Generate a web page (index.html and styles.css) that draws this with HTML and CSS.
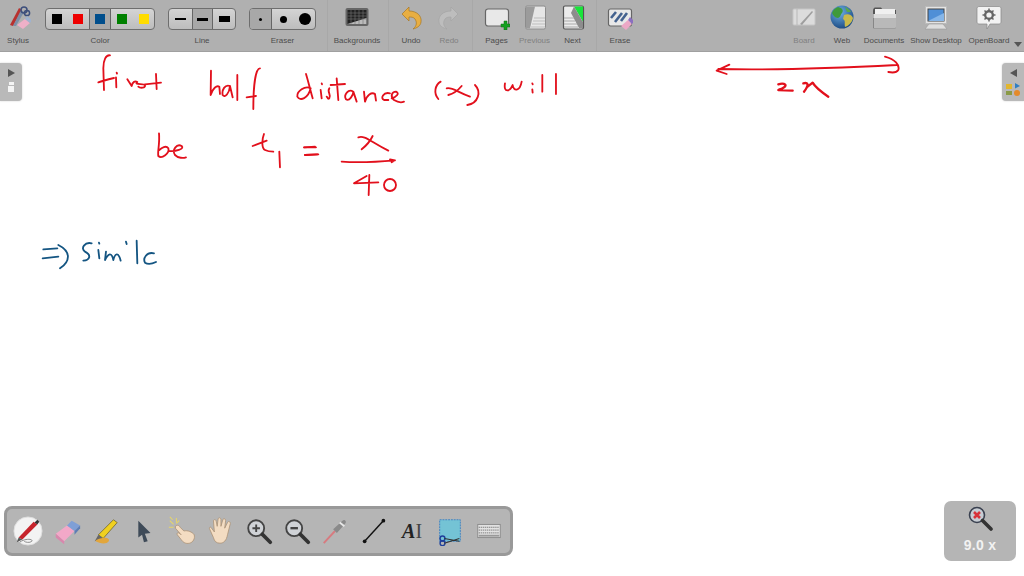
FILE: index.html
```html
<!DOCTYPE html>
<html lang="en">
<head>
<meta charset="utf-8">
<title>OpenBoard</title>
<link rel="stylesheet" href="styles.css">
</head>
<body>
<div class="app">
  <header class="toolbar">
    <div class="tool w36">
      <svg class="ic" viewBox="0 0 26 26"><path d="M5 21 L14 4 L17 6 L8 22 Z" fill="#b8312f"/><path d="M8 22 L16 6 L19 8 L11 22 Z" fill="#7d8fa8"/><circle cx="19" cy="6" r="3" fill="none" stroke="#3d4f7c" stroke-width="1.5"/><circle cx="22" cy="9" r="2.6" fill="none" stroke="#3d4f7c" stroke-width="1.5"/><path d="M12 21 L20 15 L25 19 L18 25 Z" fill="#eeb0c8"/><path d="M20 15 L25 19 L27 16 L22 12 Z" fill="#9fb2cf"/></svg>
      <span class="label">Stylus</span>
    </div>
    <div class="tool group-tool w110">
      <div class="seg">
        <span class="cell c21"><i class="swatch black"></i></span><span class="cell c22"><i class="swatch red"></i></span><span class="cell c22 on"><i class="swatch blue"></i></span><span class="cell c22"><i class="swatch green"></i></span><span class="cell c22"><i class="swatch yellow"></i></span>
      </div>
      <span class="label">Color</span>
    </div>
    <div class="tool group-tool w68">
      <div class="seg">
        <span class="cell c23"><i class="ln l1"></i></span><span class="cell c21 on"><i class="ln l2"></i></span><span class="cell c22"><i class="ln l3"></i></span>
      </div>
      <span class="label">Line</span>
    </div>
    <div class="tool group-tool w67">
      <div class="seg">
        <span class="cell c22 on"><i class="dot d1"></i></span><span class="cell c22"><i class="dot d2"></i></span><span class="cell c21"><i class="dot d3"></i></span>
      </div>
      <span class="label">Eraser</span>
    </div>
    <div class="tool w48 after-sep">
      <svg class="ic" viewBox="0 0 26 26"><rect x="1.500" y="4" width="23" height="18" rx="2" fill="#666"/><rect x="3.500" y="6" width="19" height="14" fill="#222"/><path d="M3.500 20 L22.500 14 V20 Z" fill="#bbb"/><path d="M3.500 9 H22.500 M3.500 12 H22.500 M3.500 15 H22.500 M7 6 V20 M11 6 V20 M15 6 V20 M19 6 V20" stroke="#777" stroke-width=".6"/></svg>
      <span class="label">Backgrounds</span>
    </div>
    <div class="tool w38">
      <svg class="ic" viewBox="0 0 26 26"><path d="M4 10 L11 3 V7 C19 7 24 12 23 18 C22.500 22 19 24 15 25 C19 22 19 18 17 15 C15.500 13 13 13 11 13 V17 Z" fill="#e8ae42" stroke="#a87722" stroke-width=".7"/></svg>
      <span class="label">Undo</span>
    </div>
    <div class="tool w38 after-sep">
      <svg class="ic" viewBox="0 0 26 26"><path d="M22 10 L15 3 V7 C7 7 2 12 3 18 C3.500 22 7 24 11 25 C7 22 7 18 9 15 C10.500 13 13 13 15 13 V17 Z" fill="#bdbdbd" stroke="#a5a5a5" stroke-width=".7"/></svg>
      <span class="label dim">Redo</span>
    </div>
    <div class="tool w38">
      <svg class="ic" viewBox="0 0 26 26"><rect x="1.500" y="5" width="23" height="17" rx="2.500" fill="#e8e8e8" stroke="#666" stroke-width="1.200"/><path d="M20 17 h3 v3 h3 v3 h-3 v3 h-3 v-3 h-3 v-3 h3 z" fill="#14a020" stroke="#0d6d15" stroke-width=".5"/></svg>
      <span class="label">Pages</span>
    </div>
    <div class="tool w38">
      <svg class="ic" viewBox="0 0 26 26"><rect x="3.500" y="2" width="20" height="23" rx="1.500" fill="#e6e6e6" stroke="#8c8c8c"/><path d="M4 2.500 H13 L8 24.500 H4 Z" fill="#9b9b9b"/><path d="M12 14 H23 M11 17 H23 M10 20 H23 M9 23 H23" stroke="#bdbdbd"/></svg>
      <span class="label dim">Previous</span>
    </div>
    <div class="tool w38 after-sep">
      <svg class="ic" viewBox="0 0 26 26"><rect x="3.500" y="2" width="20" height="23" rx="1.500" fill="#ececec" stroke="#555" stroke-width="1.200"/><path d="M14 2.500 H23 V18 Z" fill="#18e53a"/><path d="M14 2.500 L11 9 L19 24 H23 L23 18 Z" fill="#8d8d8d"/><path d="M4 14 H14 M4 17 H15 M4 20 H17 M4 23 H18" stroke="#aaa"/></svg>
      <span class="label">Next</span>
    </div>
    <div class="tool w38">
      <svg class="ic" viewBox="0 0 26 26"><rect x="1.500" y="5" width="23" height="17" rx="2" fill="#e8e8e8" stroke="#666" stroke-width="1.200"/><path d="M4 14 L9 8 M8 18 L15 9 M14 17 L20 9" stroke="#44628f" stroke-width="2.600"/><path d="M14 22 L21 16 L25 20 L19 26 Z" fill="#eca8c6"/><path d="M21 16 L25 20 L27 17 L23 13 Z" fill="#8a6fc0"/></svg>
      <span class="label">Erase</span>
    </div>
    <div class="spacer"></div>
    <div class="tool w38">
      <svg class="ic" viewBox="0 0 26 26"><rect x="2" y="5" width="22" height="16" rx="1" fill="#dcdcdc" stroke="#c6c6c6"/><path d="M6 5 V21" stroke="#b8b8b8"/><path d="M9 20 L21 7 L22 8 L11 21 Z" fill="#9e9e9e"/></svg>
      <span class="label dim">Board</span>
    </div>
    <div class="tool w38">
      <svg class="ic" viewBox="0 0 26 26"><defs><radialGradient id="sea" cx=".4" cy=".3" r=".8"><stop offset="0" stop-color="#6fb0e6"/><stop offset="1" stop-color="#123f78"/></radialGradient></defs><circle cx="13" cy="13" r="11.500" fill="url(#sea)"/><path d="M9 3 C13 4 15 6 13 9 C11 11 12 13 9 14 C6 14 4 11 3 9 C4 6 6 4 9 3 Z" fill="#3f9a3a"/><path d="M15 11 C19 9 23 11 24 14 C23 19 19 22 16 23 C15 19 17 17 14 15 Z" fill="#c9b94b"/><path d="M16 3 C19 4 21 6 22 8 L18 8 Z" fill="#5aa94a"/></svg>
      <span class="label">Web</span>
    </div>
    <div class="tool w46">
      <svg class="ic" viewBox="0 0 26 26"><path d="M2 7 V23 C2 24 3 24.500 4 24.500 H23 C24 24.500 25 24 25 23 V6 H12 L10 3.500 H4 C3 3.500 2 5 2 7 Z" fill="#555"/><rect x="4" y="5" width="20" height="8" fill="#f0f0f0"/><path d="M2.500 10 H25 V23 C25 24 24 24.500 23 24.500 H4 C3 24.500 2.500 24 2.500 23 Z" fill="#b9b9b9"/><path d="M2.500 10 H25 V14 H2.500 Z" fill="#dcdcdc"/></svg>
      <span class="label">Documents</span>
    </div>
    <div class="tool w58">
      <svg class="ic" viewBox="0 0 26 26"><rect x="2.500" y="2.500" width="21" height="17" fill="#e4e4e4" stroke="#bbb"/><rect x="5" y="5" width="16" height="12" fill="#4f8fd6" stroke="#444"/><path d="M5 17 L21 9 V17 Z" fill="#86b6e8"/><path d="M6 20 L2 25 H24 L20 20 Z" fill="#dedede" stroke="#999" stroke-width=".6"/></svg>
      <span class="label">Show Desktop</span>
    </div>
    <div class="tool w48">
      <svg class="ic" viewBox="0 0 26 26"><path d="M3 2.500 H23 C24 2.500 25 3.500 25 4.500 V18 C25 19 24 20 23 20 H14 L11 25 V20 H3 C2 20 1 19 1 18 V4.500 C1 3.500 2 2.500 3 2.500 Z" fill="#f2f2f2" stroke="#888" stroke-width=".7"/><circle cx="13" cy="11" r="3.800" fill="none" stroke="#666" stroke-width="2.400"/><path d="M13 4.500 V17.500 M6.500 11 H19.500 M8.500 6.500 L17.500 15.500 M17.500 6.500 L8.500 15.500" stroke="#666" stroke-width="1.500"/><circle cx="13" cy="11" r="2.600" fill="#f2f2f2"/></svg>
      <span class="label">OpenBoard</span>
    </div>
    <svg class="more" viewBox="0 0 8 5"><path d="M0 0 H8 L4 5 Z" fill="#555"/></svg>
  </header>

  <main class="board">
    <svg class="ink" viewBox="0 0 1024 524">
      <g class="ink-red" transform="translate(80,-2) scale(.3333)">
        <path d="M90 16 C78 14 70 30 70 55 L72 120 M55 97 C68 92 85 88 102 84 M108 82 L109 112 M110 68 L111 71 M142 88 L155 108 C158 95 165 92 172 96 C160 105 190 100 195 105 C198 115 180 115 175 110 M228 72 L230 117 M195 103 L243 98"/>
        <path d="M393 62 L392 135 C398 115 410 105 418 110 L420 132 M450 108 C435 102 425 120 428 135 C435 145 448 130 450 108 L458 142 M472 75 L472 150 M540 55 C528 55 520 100 520 177 M500 142 L528 138"/>
        <path d="M237 250 C240 280 232 305 235 318 C245 328 270 310 265 295 C258 285 245 293 238 300 M268 303 C285 305 315 298 305 288 C290 280 275 300 285 315 C295 325 310 325 318 322"/>
        <path d="M552 252 C545 270 545 295 555 300 C565 305 572 305 580 305 M518 288 L560 272 M598 305 L600 352 M673 292 L705 290 M675 315 L712 313"/>
      </g>
      <g class="ink-red" transform="translate(290,-2) scale(.3333)">
        <path d="M62 115 C45 105 20 125 22 140 C30 155 55 145 62 115 M48 72 C55 95 62 125 68 145 M92 120 L95 145 M95 100 L96 103 M118 115 C110 125 125 135 118 145 C112 148 115 145 110 140 M140 85 L145 150 M122 105 L165 102"/>
        <path d="M190 125 C175 115 160 135 168 148 C178 155 190 135 190 125 L200 155 M222 125 L225 155 C230 135 245 125 255 132 L258 152 M300 130 C280 125 270 145 282 150 L295 150 M305 145 C320 140 330 130 318 125 C305 125 300 140 312 150 C325 158 335 158 342 155"/>
        <path d="M452 95 C435 105 430 130 445 147 M470 115 C485 110 500 125 540 140 M515 108 C505 120 495 130 475 135 M555 105 C575 125 565 160 532 165"/>
        <path d="M645 100 C640 130 660 125 668 105 C670 125 690 125 695 95 M727 118 L728 128 M727 100 L728 103 M757 75 L757 125 M798 72 L798 132"/>
        <path d="M42 292 L78 292 M45 315 L85 313 M205 262 C225 255 240 275 295 302 M248 258 C240 275 225 290 215 298 M155 335 C200 338 270 335 315 331 M300 328 L315 331 L305 337 M230 378 L192 400 L265 397 M238 375 L236 435"/>
        <circle cx="300" cy="405" r="18"/>
      </g>
      <g class="ink-red" transform="translate(700,-2) scale(.3333)">
        <path d="M50 62 L88 44 M50 62 L80 72 M55 57 C200 60 400 55 590 45 M555 20 C585 28 600 45 595 60 C590 68 575 68 565 66"/>
        <path class="thick" d="M235 103 C250 98 275 105 235 120 L278 122 M310 100 C325 96 328 105 312 125 M320 112 L338 98 C345 110 370 130 385 140"/>
      </g>
      <g class="ink-blue" transform="translate(30,178) scale(.3333)">
        <path d="M40 58 L82 55 M38 85 L85 80 M85 45 C125 65 120 95 90 115 M185 40 C165 35 150 55 165 65 C185 75 180 90 160 92 M207 38 L208 41 M205 60 L208 85 M228 65 L225 90 C235 70 245 65 250 90 C255 70 265 65 272 92 M288 35 L290 42 M320 32 L322 100 M372 70 C350 65 338 85 345 98 C355 105 370 100 378 96"/>
      </g>
    </svg>

    <aside class="tab tab-left">
      <i class="tri right"></i>
      <span class="pages"><b class="sheet s"></b><b class="sheet m"></b></span>
    </aside>
    <aside class="tab tab-right">
      <i class="tri left"></i>
      <svg class="apps" viewBox="0 0 16 14"><path d="M1 2 H7 V7 H1 Z" fill="#e2b62e"/><path d="M10 1 L15 4 L10 6.500 Z" fill="#2f7fc4"/><path d="M1 9 H7 V13 H1 Z" fill="#8a9a45"/><circle cx="12" cy="11" r="3" fill="#e48a2a"/></svg>
    </aside>

    <nav class="dock">
      <span class="dock-item"><svg viewBox="0 0 32 32"><circle cx="16" cy="16" r="15" fill="#f3f3f3" stroke="#ddd"/><path d="M6 23 L22 6 L26 9 L10 25 Z" fill="#c6242c"/><path d="M6 23 L10 25 L4 28 Z" fill="#555"/><path d="M23 7 L26 4 L28 6 L26 9 Z" fill="#333"/><path d="M7 28 C12 24 22 24 20 27 C18 29 13 28 12 27" fill="none" stroke="#888"/></svg></span>
      <span class="dock-item"><svg viewBox="0 0 32 32"><path d="M4 19 L16 10 L24 16 L13 27 Z" fill="#f2a8c8"/><path d="M4 19 L13 27 V30 L4 23 Z" fill="#d987ad"/><path d="M16 10 L21 5 L30 10 L24 16 Z" fill="#7f9fd6"/><path d="M24 16 L30 10 V13 L24 20 Z" fill="#5d7db5"/></svg></span>
      <span class="dock-item"><svg viewBox="0 0 32 32"><path d="M9 20 L25 4 L29 7 L14 24 Z" fill="#f0d020" stroke="#5d5320" stroke-width=".7"/><path d="M9 20 L14 24 L5 27 Z" fill="#666"/><path d="M6 26 C12 22 22 22 20 27 C17 31 10 29 6 27 Z" fill="#e2a63c"/></svg></span>
      <span class="dock-item"><svg viewBox="0 0 32 32"><path d="M11 5 L24 18 L18 19 L21 27 L17 28 L15 20 L11 23 Z" fill="#3e4a58"/></svg></span>
      <span class="dock-item"><svg viewBox="0 0 32 32"><path d="M3 5 L7 9 M10 2 V7 M2 12 H7 M13 5 L10 8 M3 1 L6 4" stroke="#e7d667" stroke-width="1.100"/><path d="M9 11 C11 9 13 10 14 12 L18 16 C22 15 27 17 29 20 C30 24 28 28 24 29 C20 30 17 28 15 25 L11 20 C10 18 12 17 14 19 L15 20 L9 13 Z" fill="#f3dcc2" stroke="#a98f72" stroke-width=".8"/></svg></span>
      <span class="dock-item"><svg viewBox="0 0 32 32"><path d="M9 5 C10 3 12 4 12 6 L13 11 L14 3 C15 1 17 2 17 4 L17 11 L19 4 C20 2 22 3 22 5 L21 13 L24 7 C25 5 27 6 27 8 L24 20 C23 26 20 29 16 29 C12 29 10 27 9 23 L5 14 C4 12 6 11 7 13 L10 17 Z" fill="#f3dcc2" stroke="#a98f72" stroke-width=".8"/></svg></span>
      <span class="dock-item"><svg viewBox="0 0 32 32"><circle cx="13" cy="13" r="8.500" fill="#cfd2d6" stroke="#444" stroke-width="2"/><path d="M9 13 H17 M13 9 V17" stroke="#444" stroke-width="2"/><path d="M19.500 19.500 L28 28" stroke="#333" stroke-width="4" stroke-linecap="round"/></svg></span>
      <span class="dock-item"><svg viewBox="0 0 32 32"><circle cx="13" cy="13" r="8.500" fill="#cfd2d6" stroke="#444" stroke-width="2"/><path d="M9 13 H17" stroke="#444" stroke-width="2.500"/><path d="M19.500 19.500 L28 28" stroke="#333" stroke-width="4" stroke-linecap="round"/></svg></span>
      <span class="dock-item"><svg viewBox="0 0 32 32"><path d="M4 29 L16 16" stroke="#d77a7f" stroke-width="2"/><path d="M14 14 L24 5 C26 3 29 6 27 8 L18 18 Z" fill="#8a8a8a"/><path d="M21 7 L26 11" stroke="#e8e8e8" stroke-width="2"/></svg></span>
      <span class="dock-item"><svg viewBox="0 0 32 32"><path d="M6 27 L26 5" stroke="#111" stroke-width="1.500"/><circle cx="6" cy="27" r="2" fill="#111"/><circle cx="26" cy="5" r="2" fill="#111"/></svg></span>
      <span class="dock-item text-ic"><b>A</b><em>I</em></span>
      <span class="dock-item"><svg viewBox="0 0 32 32"><rect x="5" y="4" width="22" height="23" fill="#74c3d5" stroke="#3f7fc0" stroke-dasharray="2 1"/><circle cx="8" cy="24" r="2.600" fill="none" stroke="#1f3f9a" stroke-width="1.500"/><circle cx="8" cy="29" r="2.600" fill="none" stroke="#1f3f9a" stroke-width="1.500"/><path d="M10 24 L26 27 M10 29 L26 24" stroke="#333" stroke-width="1.200"/></svg></span>
      <span class="dock-item"><svg viewBox="0 0 32 32"><rect x="4" y="9" width="24" height="14" fill="#e2e2e2" stroke="#8a8a8a"/><path d="M5 12 H27 M5 15 H27 M5 18 H27" stroke="#777" stroke-dasharray="1.500 .7"/><path d="M5 21 H27" stroke="#999" stroke-width="2"/></svg></span>
    </nav>

    <aside class="zoom-box">
      <svg class="zoom-ic" viewBox="0 0 26 26"><circle cx="10" cy="10" r="7.500" fill="#c7ccd3" stroke="#3a4150" stroke-width="1.600"/><path d="M7 7 L13 13 M13 7 L7 13" stroke="#d8333b" stroke-width="2.600"/><path d="M15.500 15.500 L24 24" stroke="#333" stroke-width="3.600" stroke-linecap="round"/></svg>
      <span class="zoom-text">9.0 x</span>
    </aside>
  </main>
</div>
</body>
</html>
```

FILE: styles.css
```css
* { box-sizing: border-box; }
html, body { margin: 0; padding: 0; background: #fff; }
.app { width: 1024px; height: 576px; display: flex; flex-direction: column; overflow: hidden; font-family: "Liberation Sans", Arial, sans-serif; }

.toolbar { height: 52px; flex: none; display: flex; align-items: flex-start; padding-right: 11px; background: #b0b0b0; border-bottom: 1px solid #a0a0a0; position: relative; }
.tool { flex: none; height: 51px; display: flex; flex-direction: column; align-items: center; position: relative; padding-top: 4px; }
.w36 { width: 36px; }
.w38 { width: 38px; }
.w46 { width: 46px; }
.w48 { width: 48px; }
.w58 { width: 58px; }
.w67 { width: 67px; margin-left: 13px; margin-right: 17px; }
.w68 { width: 68px; margin-left: 13px; }
.w110 { width: 110px; margin-left: 9px; }
.after-sep { margin-right: 9.500px; }
.after-sep::after { content: ""; position: absolute; right: -5px; top: 0; bottom: 0; width: 1px; background: #a8a8a8; }
.w48.after-sep { margin-right: 11px; }
.w48.after-sep::after { right: -8px; }
.w67::after { content: ""; position: absolute; right: -12px; top: 0; bottom: 0; width: 1px; background: #a8a8a8; }
.spacer { flex: 1; }
.ic { width: 26px; height: 26px; display: block; }
.label { position: absolute; top: 34.500px; left: 50%; transform: translateX(-50%); font-size: 8px; line-height: 11px; color: #4c4c4c; white-space: nowrap; }
.label.dim { color: #808080; }
.more { width: 8px; height: 5px; position: absolute; right: 2px; top: 42px; }

.group-tool { padding-top: 8px; }
.seg { display: flex; height: 22px; width: 100%; border: 1px solid #6e6e6e; border-radius: 4px; background: linear-gradient(#d4d4d4, #bdbdbd); overflow: hidden; }
.cell { flex: none; display: flex; align-items: center; justify-content: center; height: 100%; }
.cell.on { background: #a8a8a8; border-left: 1px solid #666; border-right: 1px solid #666; }
.cell.on:first-child { border-left: 0; }
.c21 { width: 21px; }
.c22 { width: 22px; }
.c23 { width: 23px; }
.swatch { display: block; width: 10px; height: 10px; }
.black { background: #000; }
.red { background: #ee0000; }
.blue { background: #004e8c; }
.green { background: #008000; }
.yellow { background: #ffdc00; }
.ln { display: block; width: 11px; background: #000; }
.l1 { height: 2px; }
.l2 { height: 3px; }
.l3 { height: 6px; }
.dot { display: block; background: #000; border-radius: 50%; }
.d1 { width: 3px; height: 3px; }
.d2 { width: 7px; height: 7px; }
.d3 { width: 12px; height: 12px; }

.board { flex: 1; position: relative; background: #fff; }
.ink { position: absolute; inset: 0; width: 1024px; height: 524px; }
.ink g { fill: none; stroke-linecap: round; stroke-linejoin: round; stroke-width: 5.500; }
.ink .ink-red { stroke: #e2101c; }
.ink .thick { stroke-width: 7; }
.ink .ink-blue { stroke: #145582; }

.tab { position: absolute; top: 11px; width: 22px; height: 38px; background: #b9b9b9; display: flex; flex-direction: column; align-items: center; gap: 5px; padding-top: 6px; box-shadow: 0 0 2px #ccc; }
.tab-left { left: 0; border-radius: 0 4px 4px 0; }
.tab-right { right: 0; border-radius: 4px 0 0 4px; }
.tri { display: block; width: 0; height: 0; border-top: 4px solid transparent; border-bottom: 4px solid transparent; }
.tri.right { border-left: 7px solid #555; }
.tri.left { border-right: 7px solid #555; }
.pages { display: flex; flex-direction: column; gap: 1px; align-items: center; }
.sheet { display: block; background: #f4f4f4; }
.sheet.s { width: 5px; height: 3px; }
.sheet.m { width: 6px; height: 6px; }
.apps { width: 16px; height: 14px; }

.dock { position: absolute; left: 4px; top: 454px; width: 509px; height: 50px; display: flex; align-items: center; padding-left: 2px; background: #b5b5b5; border: 3px solid #999; border-radius: 8px; }
.dock-item { flex: none; width: 38.400px; display: flex; align-items: center; justify-content: center; height: 32px; }
.dock-item svg { width: 30px; height: 30px; display: block; }
.text-ic { font-family: "Liberation Serif", serif; color: #222; font-size: 20px; line-height: 1; }
.text-ic b { font-style: italic; }
.text-ic em { font-style: normal; font-weight: 400; color: #444; }

.zoom-box { position: absolute; left: 944px; top: 449px; width: 72px; height: 60px; background: #b5b5b5; border-radius: 7px; display: flex; flex-direction: column; align-items: center; padding-top: 4px; }
.zoom-ic { width: 26px; height: 26px; display: block; }
.zoom-text { margin-top: 6px; color: #f2f2f2; font-size: 14px; font-weight: 700; line-height: 16px; letter-spacing: .3px; }
```
